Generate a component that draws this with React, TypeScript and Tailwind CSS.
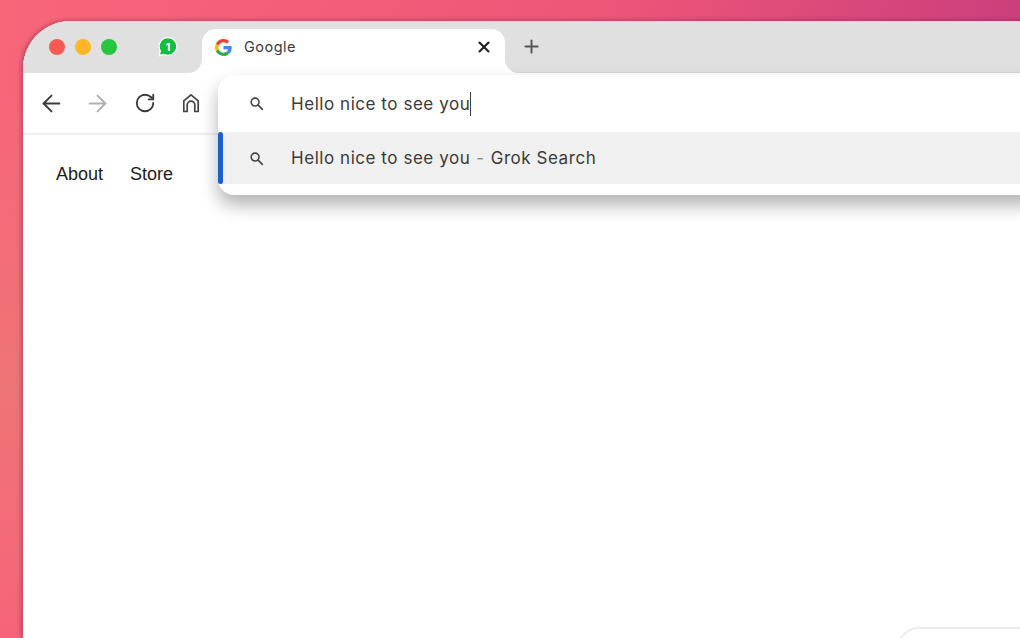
import { ArrowLeft, ArrowRight, Plus, RotateCw, X } from 'lucide-react';

const GoogleLogo = () => (
  <svg viewBox="0 0 48 48" className="h-[17px] w-[17px] shrink-0">
    <path fill="#EA4335" d="M24 9.5c3.5 0 6.7 1.2 9.2 3.600l6.900-6.900C35.900 2.400 30.500 0 24 0 14.600 0 6.500 5.400 2.600 13.200l8 6.200C12.500 13.600 17.800 9.500 24 9.500z" />
    <path fill="#4285F4" d="M47 24.500c0-1.600-.1-3.100-.4-4.500H24v9h12.900c-.6 3-2.200 5.500-4.700 7.200l7.700 6c4.500-4.200 7.100-10.300 7.100-17.700z" />
    <path fill="#FBBC05" d="M10.600 28.600c-.5-1.400-.8-3-.8-4.600s.3-3.200.8-4.600l-8-6.200C.9 16.500 0 20.100 0 24s.9 7.500 2.600 10.800l8-6.200z" />
    <path fill="#34A853" d="M24 48c6.500 0 11.900-2.100 15.900-5.800l-7.700-6c-2.100 1.400-4.900 2.300-8.200 2.300-6.200 0-11.500-4.200-13.400-9.800l-8 6.200C6.500 42.600 14.600 48 24 48z" />
  </svg>
);

const ChatBadge = () => (
  <svg viewBox="0 0 20 20" className="h-5 w-5 shrink-0">
    <path fill="#ffffff" d="M10 0a9.500 9.500 0 0 0-8.300 14.100L.4 19.400l5.500-1.200A9.500 9.500 0 1 0 10 0z" />
    <path fill="#14bd40" d="M10 1.300a8.200 8.200 0 0 0-7 12.500l-.9 3.800 3.900-.9A8.200 8.200 0 1 0 10 1.300z" />
    <text x="10" y="13.600" textAnchor="middle" fontSize="10.500" fontWeight="700" fill="#ffffff" fontFamily="Inter, sans-serif">
      1
    </text>
  </svg>
);

const HomeIcon = () => (
  <svg viewBox="0 0 20 20" fill="none" stroke="#444444" strokeWidth="1.700" strokeLinejoin="round" className="h-5 w-5">
    <path d="M2.800 18.500V7.800L10 1.800l7.200 6v10.700h-3.400v-6.500a3.800 3.800 0 0 0-7.600 0v6.500H2.800z" />
  </svg>
);

const SearchGlyph = () => (
  <svg viewBox="0 0 16 16" fill="none" stroke="#444444" strokeWidth="1.700" strokeLinecap="round" className="h-[15px] w-[15px] shrink-0">
    <circle cx="6.500" cy="6.500" r="4.200" />
    <path d="M9.800 9.800l4.400 4.400" />
  </svg>
);

export default function App() {
  return (
    <div className="relative h-[638px] w-[1020px] overflow-hidden bg-[linear-gradient(180deg,rgba(238,118,118,0)_15%,rgba(238,118,118,0.9)_60%,rgba(250,108,130,0)_100%),linear-gradient(98deg,#f8667a_0%,#ee5678_55%,#c43a7e_100%)] pl-[23px] pt-[21px] font-['Inter',sans-serif]">
      <div className="flex h-[617px] w-[1040px] flex-col overflow-hidden rounded-tl-[48px] bg-white shadow-[-2px_-1px_4px_rgba(90,20,50,0.35)]">
        {/* tab strip */}
        <div className="flex h-[52px] shrink-0 bg-white">
          <div className="flex w-[179px] items-center rounded-br-[14px] bg-[#e0e0e0] pb-[1px] pl-[26px]">
            <span className="h-4 w-4 rounded-full bg-[#f75a53]" />
            <span className="ml-[10px] h-4 w-4 rounded-full bg-[#fdb726]" />
            <span className="ml-[10px] h-4 w-4 rounded-full bg-[#28c53f]" />
            <span className="ml-[41px]">
              <ChatBadge />
            </span>
          </div>
          <div className="w-[303px] bg-[#e0e0e0] pt-2">
            <div className="flex h-[44px] items-center rounded-t-[14px] bg-white pb-[8px] pl-[13px] pr-[12px]">
              <GoogleLogo />
              <span className="ml-[12px] text-[14.500px] tracking-[0.5px] text-[#3a3a3a]">Google</span>
              <X className="ml-auto h-[18px] w-[18px] text-[#222222]" strokeWidth={2.800} />
            </div>
          </div>
          <div className="flex flex-1 items-center rounded-bl-[14px] border-b border-[#d8d8d8] bg-[#e0e0e0] pb-[1px] pl-[16px]">
            <Plus className="h-[21px] w-[21px] text-[#555555]" strokeWidth={2.200} />
          </div>
        </div>

        {/* toolbar */}
        <div className="flex h-[62px] shrink-0 items-center border-b-2 border-[#f0f0f0] pl-[15px]">
          <ArrowLeft className="h-[27px] w-[27px] text-[#3a3a3a]" strokeWidth={1.700} />
          <ArrowRight className="ml-[19px] h-[27px] w-[27px] text-[#b0b0b0]" strokeWidth={1.700} />
          <RotateCw className="ml-[23px] h-[22px] w-[22px] text-[#3a3a3a]" strokeWidth={2} />
          <span className="ml-[25px]">
            <HomeIcon />
          </span>
        </div>

        {/* page */}
        <div className="flex gap-[27px] pl-[33px] pt-[26px] font-['Liberation_Sans',sans-serif] text-[18px] text-[#1c1c1c]">
          <span>About</span>
          <span>Store</span>
        </div>
      </div>

      {/* omnibox dropdown */}
      <div className="absolute left-[218px] top-[75px] w-[830px] rounded-[16px] bg-white pb-[11px] shadow-[0_10px_18px_rgba(0,0,0,0.3)]">
        <div className="flex h-[57px] items-center pl-[31px] text-[17px] tracking-[0.55px] text-[#3a3a3a]">
          <SearchGlyph />
          <span className="ml-[27px] border-r border-[#3a3a3a] leading-[24px]">Hello nice to see you</span>
        </div>
        <div className="relative flex h-[52px] items-center bg-[#f0f0f0] pl-[31px] text-[17px] tracking-[0.55px] text-[#3a3a3a]">
          <span className="absolute inset-y-0 left-0 w-[5px] rounded-[3px] bg-[#1a5fd0]" />
          <SearchGlyph />
          <span className="ml-[27px] pt-[2px]">Hello nice to see you</span>
          <span className="ml-[6px] pt-[2px] text-[#888888]">-</span>
          <span className="ml-[6px] pt-[2px]">Grok Search</span>
        </div>
      </div>

      {/* floating card peeking at the bottom */}
      <div className="absolute left-[897px] top-[627px] h-[60px] w-[200px] rounded-[22px] border-2 border-[#ececec] bg-white" />
    </div>
  );
}
